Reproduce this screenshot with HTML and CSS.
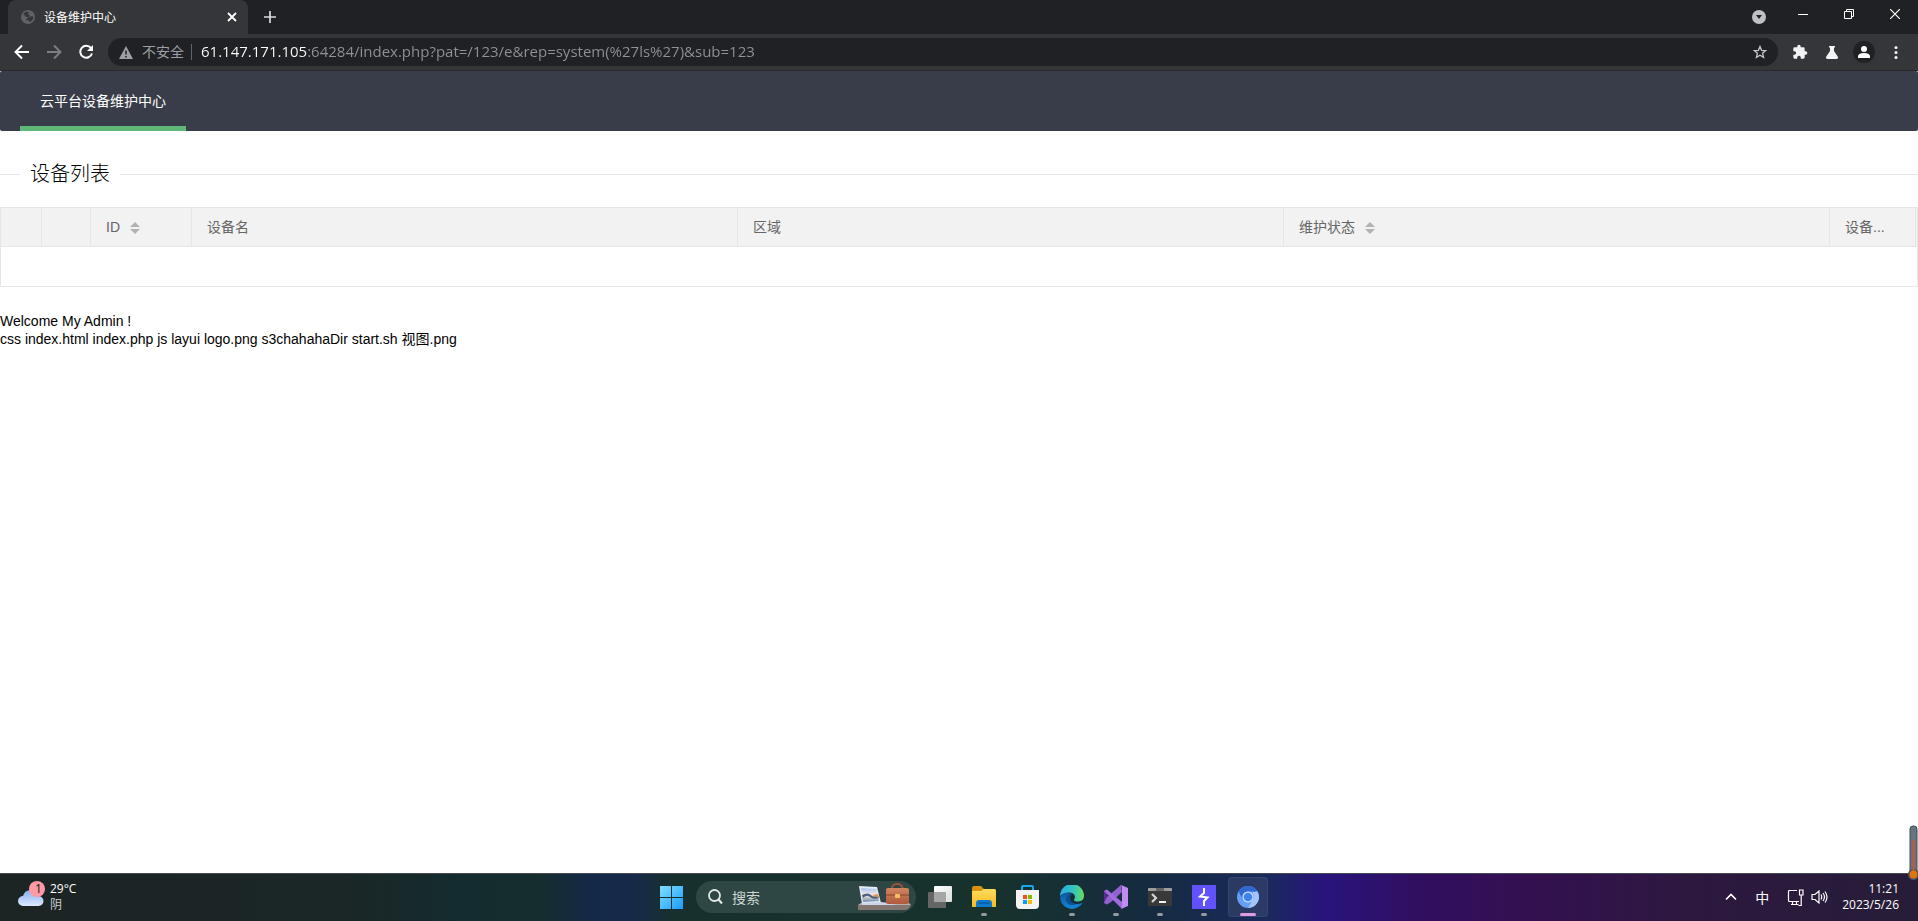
FILE: index.html
```html
<!DOCTYPE html>
<html lang="zh-CN">
<head>
    <meta charset="UTF-8">
    <meta name="viewport" content="width=device-width, initial-scale=1.0">
    <title>设备维护中心</title>
    <link rel="stylesheet" href="styles.css">
</head>
<body>
    <!-- browser -->
    <header class="browser">
        <div class="tab-strip">
            <div class="tab">
                <svg width="14" height="14" viewBox="0 0 14 14"><circle cx="7" cy="7" r="7" fill="#5f6368"/><path d="M2 4l3-2.500 3 .5-1 2 2 1.500-1.500 1.500H5L4 5.500zM8 7l3-1 1.500 1-1 3L9 12 7.500 10.500 5 10l1-2z" fill="#35363a"/></svg>
                <span class="tab-title">设备维护中心</span>
                <button class="icon-btn tab-close" aria-label="关闭标签页">
                    <svg width="10" height="10" viewBox="0 0 10 10"><path d="M1 1l8 8M9 1l-8 8" stroke="#fff" stroke-width="1.800"/></svg>
                </button>
            </div>
            <button class="icon-btn new-tab" aria-label="新标签页">
                <svg width="12" height="12" viewBox="0 0 12 12"><path d="M6 0v12M0 6h12" stroke="#dadce0" stroke-width="1.700"/></svg>
            </button>
            <div class="window-buttons">
                <button class="icon-btn tab-search" aria-label="搜索标签页">
                    <svg width="14" height="14" viewBox="0 0 14 14"><circle cx="7" cy="7" r="7" fill="#bdc1c6"/><path d="M4 5h6l-3 4z" fill="#202124"/></svg>
                </button>
                <button class="icon-btn window-btn" aria-label="最小化">
                    <svg width="10" height="10" viewBox="0 0 10 10"><path d="M0 5.500h10" stroke="#fff"/></svg>
                </button>
                <button class="icon-btn window-btn" aria-label="还原">
                    <svg width="10" height="10" viewBox="0 0 10 10"><path d="M.5 2.500h7v7h-7zM2.500 2.500v-2h7v7h-2" fill="none" stroke="#fff"/></svg>
                </button>
                <button class="icon-btn window-btn" aria-label="关闭">
                    <svg width="10" height="10" viewBox="0 0 10 10"><path d="M0 0l10 10M10 0L0 10" stroke="#fff" stroke-width="1.200"/></svg>
                </button>
            </div>
        </div>
        <div class="toolbar">
            <div class="history">
                <button class="icon-btn" aria-label="后退">
                    <svg width="16" height="16" viewBox="0 0 16 16"><path d="M15 8H2M8 1.500L1.500 8 8 14.500" fill="none" stroke="#fff" stroke-width="1.900"/></svg>
                </button>
                <button class="icon-btn" aria-label="前进">
                    <svg width="16" height="16" viewBox="0 0 16 16"><path d="M1 8h13M8 1.500L14.500 8 8 14.500" fill="none" stroke="#7d7e80" stroke-width="1.900"/></svg>
                </button>
                <button class="icon-btn" aria-label="重新加载">
                    <svg width="16" height="16" viewBox="0 0 16 16"><path d="M13 4a6 6 0 1 0 1 5.500" fill="none" stroke="#fff" stroke-width="2"/><path d="M15 1v6H9z" fill="#fff"/></svg>
                </button>
            </div>
            <div class="address-bar">
                <svg width="14" height="13" viewBox="0 0 14 13"><path d="M7 0l7 13H0z" fill="#9aa0a6"/><path d="M7 4.500v4M7 10v1.500" stroke="#202124" stroke-width="1.500"/></svg>
                <label class="not-secure" for="url">不安全</label>
                <input class="url" id="url" type="text" value="61.147.171.105:64284/index.php?pat=/123/e&amp;rep=system(%27ls%27)&amp;sub=123">
                <button class="icon-btn" aria-label="收藏">
                    <svg width="14" height="14" viewBox="0 0 14 14"><path d="M7 1.500l1.600 3.800 4.100.3-3.100 2.700 1 4L7 10.200l-3.600 2.100 1-4L1.300 5.600l4.100-.3z" fill="none" stroke="#c4c7cb" stroke-width="1.300"/></svg>
                </button>
            </div>
            <div class="extensions">
                <button class="icon-btn" aria-label="扩展程序">
                    <svg width="16" height="16" viewBox="0 0 24 24"><path d="M20.500 11H19V7a2 2 0 0 0-2-2h-4V3.500a2.500 2.500 0 0 0-5 0V5H4a2 2 0 0 0-2 2v3.800h1.500a2.700 2.700 0 0 1 0 5.400H2V20a2 2 0 0 0 2 2h3.800v-1.500a2.700 2.700 0 0 1 5.400 0V22H17a2 2 0 0 0 2-2v-4h1.500a2.500 2.500 0 0 0 0-5z" fill="#f1f3f4"/></svg>
                </button>
                <button class="icon-btn" aria-label="实验">
                    <svg width="12" height="13" viewBox="0 0 12 13"><path d="M3 0h6v1.500H8V5l4 6q.3 1.500-1 2H1q-1.300-.5-1-2l4-6V1.500H3z" fill="#f1f3f4"/></svg>
                </button>
                <button class="icon-btn" aria-label="用户">
                    <svg width="22" height="22" viewBox="0 0 22 22"><circle cx="11" cy="11" r="11" fill="#202124"/><circle cx="11" cy="8" r="3" fill="#fff"/><path d="M5 17v-1.500q0-3.500 6-3.500t6 3.500V17z" fill="#fff"/></svg>
                </button>
                <button class="icon-btn" aria-label="菜单">
                    <svg width="4" height="13" viewBox="0 0 4 13"><g fill="#fff"><circle cx="2" cy="1.600" r="1.500"/><circle cx="2" cy="6.500" r="1.500"/><circle cx="2" cy="11.400" r="1.500"/></g></svg>
                </button>
            </div>
        </div>
    </header>

    <!-- page -->
    <main class="page">
        <nav class="nav">
            <a class="nav-item" href="#">云平台设备维护中心</a>
        </nav>

        <fieldset class="title-line">
            <legend>设备列表</legend>
        </fieldset>

        <div class="table-view">
            <div class="table-header">
                <table>
                    <colgroup>
                        <col class="col-check">
                        <col class="col-num">
                        <col class="col-id">
                        <col>
                        <col>
                        <col>
                        <col class="col-last">
                    </colgroup>
                    <thead>
                        <tr>
                            <th></th>
                            <th></th>
                            <th>ID<span class="sort"></span></th>
                            <th>设备名</th>
                            <th>区域</th>
                            <th>维护状态<span class="sort"></span></th>
                            <th>设备...</th>
                        </tr>
                    </thead>
                </table>
            </div>
            <div class="table-body"></div>
        </div>

        <div class="output">
            Welcome My Admin !<br>
            css index.html index.php js layui logo.png s3chahahaDir start.sh 视图.png
        </div>
    </main>

    <!-- taskbar -->
    <footer class="taskbar">
        <button class="weather">
            <svg width="32" height="28" viewBox="0 0 32 28">
                <defs><linearGradient id="cloud" x2="0" y2="1"><stop stop-color="#86aef0"/><stop offset="1" stop-color="#dfeaff"/></linearGradient></defs>
                <path d="M5 25a5 5 0 0 1 0-10q1.500-6 8-6 6 0 7.500 6a5 5 0 0 1 0 10z" fill="url(#cloud)"/>
                <circle cx="19" cy="8" r="8" fill="#ff99a4"/>
                <text x="17" y="12" font-size="12" fill="#111">1</text>
            </svg>
            <span>29°C<br><span class="sky">阴</span></span>
        </button>

        <div class="apps">
            <button class="app" aria-label="开始">
                <svg width="24" height="24" viewBox="0 0 24 24">
                    <defs><linearGradient id="win" x2="1" y2="1"><stop stop-color="#7fe0ff"/><stop offset="1" stop-color="#1a9bff"/></linearGradient></defs>
                    <path d="M0 1h11v11H0zM12 1h11v11H12zM0 13h11v11H0zM12 13h11v11H12z" fill="url(#win)"/>
                </svg>
            </button>
            <div class="search">
                <svg width="15" height="16" viewBox="0 0 15 16"><circle cx="6.500" cy="6.500" r="5.500" fill="none" stroke="#e2e8e6" stroke-width="1.800"/><path d="M10.500 10.500l3.500 4" stroke="#e2e8e6" stroke-width="2"/></svg>
                <input type="text" placeholder="搜索" aria-label="搜索">
                <svg width="54" height="28" viewBox="0 0 54 28">
                    <defs>
                        <linearGradient id="screen" x2="0" y2="1"><stop stop-color="#a8c4f0"/><stop offset=".5" stop-color="#f3e8e4"/><stop offset="1" stop-color="#7088a8"/></linearGradient>
                        <linearGradient id="bag" x2="0" y2="1"><stop stop-color="#d08560"/><stop offset="1" stop-color="#b0593e"/></linearGradient>
                    </defs>
                    <path d="M0 22h53q-2 5-6 5H0z" fill="#82766f"/>
                    <path d="M0 22l3-2h48l2 2z" fill="#b8aea9"/>
                    <path d="M1 3l18 1 4 16-19 1z" fill="#e5ebf5"/>
                    <path d="M3 5l15 1 3 12-16 1z" fill="url(#screen)"/>
                    <path d="M4 12q6-3 9 0t7 0l1 3q-6 2-9-1t-7 1z" fill="#4d5f7c"/>
                    <path d="M14 12l6-1 1 4z" fill="#e09358"/>
                    <path d="M4 20l19-1 16 2-6 1H4z" fill="#cbd4ea"/>
                    <path d="M34 6q0-5 5-5t6 5" fill="none" stroke="#9a5238" stroke-width="1.800"/>
                    <rect x="28" y="5" width="23" height="16" rx="2" fill="url(#bag)"/>
                    <path d="M28 12h23" stroke="#8e432e"/>
                    <rect x="37" y="11" width="5" height="4" rx="1" fill="#f2c060"/>
                </svg>
            </div>
            <button class="app" aria-label="任务视图">
                <svg width="24" height="24" viewBox="0 0 24 24">
                    <defs><linearGradient id="view" x2="1" y2="1"><stop stop-color="#fff"/><stop offset="1" stop-color="#dcdcdc"/></linearGradient></defs>
                    <rect x="6" y="1" width="18" height="16" rx="1" fill="url(#view)"/>
                    <rect y="7" width="18" height="16" rx="1" fill="#666"/>
                    <path d="M6 7h12v10H6z" fill="#a6a6a6"/>
                </svg>
            </button>
            <button class="app running" aria-label="文件资源管理器">
                <svg width="24" height="24" viewBox="0 0 24 24">
                    <defs><linearGradient id="folder" x2="0" y2="1"><stop stop-color="#ffdc5e"/><stop offset="1" stop-color="#f9b81e"/></linearGradient></defs>
                    <path d="M0 3q0-2 2-2h7l3 3h10q2 0 2 2v6H0z" fill="#d8930b"/>
                    <path d="M0 6h9l3-2h10q2 0 2 2v16H0z" fill="url(#folder)"/>
                    <path d="M4 22v-4q0-3 3-3h10q3 0 3 3v4z" fill="#0f7bd0"/>
                    <path d="M7 18h10" stroke="#075c9e" stroke-width="1.600" stroke-linecap="round"/>
                </svg>
            </button>
            <button class="app" aria-label="应用商店">
                <svg width="24" height="24" viewBox="0 0 24 24">
                    <path d="M6 6V2q0-1 1-1h9q1 0 1 1v4" fill="none" stroke="#18a7ee" stroke-width="2"/>
                    <path d="M0 5h23v15q0 4-4 4H4q-4 0-4-4z" fill="#f3f3f3"/>
                    <path d="M7 10h4v4H7z" fill="#f25022"/><path d="M12 10h4v4h-4z" fill="#7fba00"/><path d="M7 15h4v4H7z" fill="#00a4ef"/><path d="M12 15h4v4h-4z" fill="#ffb900"/>
                </svg>
            </button>
            <button class="app running" aria-label="Edge">
                <svg width="24" height="24" viewBox="0 0 24 24">
                    <defs>
                        <linearGradient id="edge-top"><stop stop-color="#28a8e8"/><stop offset=".6" stop-color="#36c6b8"/><stop offset="1" stop-color="#6bdc57"/></linearGradient>
                        <linearGradient id="edge-low" x2="0" y2="1"><stop stop-color="#0c59a4"/><stop offset="1" stop-color="#1585d5"/></linearGradient>
                    </defs>
                    <path d="M0 12a12 12 0 0 0 19 9.500q3-1.500 3.500-4-3 2-7 1.500-6-1-6-6 0-3 2-4Q4 6 0 12z" fill="url(#edge-low)"/>
                    <path d="M0 11A12 12 0 0 1 24 11q0 5-6 5.500-4 0-4-2 1-1 1-3-1-4-6-4-6 0-9 3.500z" fill="url(#edge-top)"/>
                    <path d="M7 11q3-4 6-2-3 0-3 4 0 5 6 6-7 3-10-3-1-3 1-5z" fill="#0b4f91"/>
                </svg>
            </button>
            <button class="app running" aria-label="Visual Studio">
                <svg width="24" height="24" viewBox="0 0 24 24">
                    <path d="M0 6l3-1.500v15L0 18z" fill="#5b2d91"/>
                    <path d="M3 12L17 0l1 7L7 17l-4 2.500L0 18z" fill="#9260cf"/>
                    <path d="M17 0l7 3v18l-7 3 1-3V3z" fill="#c08cf2"/>
                    <path d="M3 4.500L18 17v7L0 6z" fill="#a26bdc"/>
                </svg>
            </button>
            <button class="app running" aria-label="终端">
                <svg width="24" height="24" viewBox="0 0 24 24">
                    <rect y="3" width="24" height="18" rx="1" fill="#393939"/>
                    <path d="M0 6V4q0-1 1-1h22q1 0 1 1v2z" fill="#9c9c9c"/><path d="M8 3h8v3H8z" fill="#666"/>
                    <path d="M4 9l4 4-4 4" fill="none" stroke="#d5d5d5" stroke-width="2.200"/><path d="M11 17h7" stroke="#f1f1f1" stroke-width="2"/>
                </svg>
            </button>
            <button class="app running" aria-label="Burp Suite">
                <svg width="24" height="24" viewBox="0 0 24 24">
                    <path d="M0 0h24v24H0z" fill="#6151ff"/>
                    <path d="M12 3v5l-4 3.500 7.500 1L12 16v5" fill="none" stroke="#fff" stroke-width="2"/>
                </svg>
            </button>
            <button class="app running active" aria-label="Chromium">
                <svg width="24" height="24" viewBox="0 0 24 24">
                    <circle cx="12" cy="12" r="11" fill="#669df6"/>
                    <path d="M2.500 6.500A11 11 0 0 1 21.500 6.500H12a5.500 5.500 0 0 0-5 8z" fill="#3167d1"/>
                    <path d="M21.500 6.500A11 11 0 0 1 12 23l5-8.500a5.500 5.500 0 0 0-1-7z" fill="#a3c4fb"/>
                    <circle cx="12" cy="12" r="5.500" fill="#c9ddfd"/><circle cx="12" cy="12" r="4.300" fill="#3f82f0"/>
                </svg>
            </button>
        </div>

        <div class="tray">
            <button class="icon-btn" aria-label="显示隐藏的图标">
                <svg width="12" height="8" viewBox="0 0 12 8"><path d="M1 6.500l5-5 5 5" fill="none" stroke="#fff" stroke-width="1.600"/></svg>
            </button>
            <button class="icon-btn ime">中</button>
            <button class="icon-btn" aria-label="网络和音量">
                <svg width="17" height="17" viewBox="0 0 17 17"><path d="M10 1.500H2.500q-1 0-1 1v9q0 1 1 1h9.500M5.500 13v2.500M9.500 13v2.500M4 15.500h7.500M12.500 1h3.500v5h-3.500zM14.200 6v10.500h-2.700" fill="none" stroke="#fff" stroke-width="1.200"/></svg>
                <svg width="17" height="14" viewBox="0 0 17 14"><path d="M1 4.500h3l4-3.500v12L4 9.500H1zM10 4.500q1.500 2.500 0 5M12 3q3 4 0 8M14 1.500q4 5.500 0 11" fill="none" stroke="#fff" stroke-width="1.200"/></svg>
            </button>
            <button class="clock">11:21<br>2023/5/26</button>
        </div>

        <!-- temperature widget hanging over the screen edge -->
        <svg class="thermometer" width="10" height="56" viewBox="0 0 10 56">
            <rect x="2" y="1" width="7" height="50" rx="3" fill="#66757f" stroke="#3f4d56"/>
            <circle cx="5.500" cy="49.500" r="5.500" fill="#44535d"/>
            <path d="M5.500 15v32" stroke="#d2512b" stroke-width="2"/>
            <circle cx="5.500" cy="49.500" r="4" fill="#df730c"/>
        </svg>
    </footer>
</body>
</html>
```
FILE: styles.css
```css
* {
    box-sizing: border-box;
}

body {
    display: flex;
    flex-direction: column;
    min-height: 100vh;
    margin: 0;
    background-color: #fff;
    color: #000;
    font-family: "Liberation Sans", "Noto Sans CJK SC", sans-serif;
    font-size: 14px;
}

button,
input {
    font-family: inherit;
    padding: 0;
    border: none;
    background: none;
    outline: none;
}

svg {
    display: block;
    flex-shrink: 0;
}

.icon-btn {
    display: flex;
    align-items: center;
    justify-content: center;
    cursor: pointer;
}

/* browser */
.browser {
    font-family: "Open Sans", "Noto Sans CJK SC", sans-serif;
    background-color: #202124;
    border-bottom: 1px solid #28292c;
}

.tab-strip {
    display: flex;
    align-items: center;
    height: 34px;
    padding-left: 8px;
}

.tab {
    display: flex;
    align-items: center;
    width: 240px;
    height: 34px;
    padding: 0 11px 0 13px;
    border-radius: 8px 8px 0 0;
    background-color: #35363a;
    color: #fff;
    font-size: 12px;
}

.tab-title {
    flex: 1;
    margin-left: 9px;
}

.new-tab {
    margin-left: 16px;
}

.window-buttons {
    display: flex;
    align-items: center;
    margin-left: auto;
}

.tab-search {
    width: 42px;
}

.window-btn {
    width: 46px;
    height: 34px;
    padding-bottom: 6px;
}

.toolbar {
    display: flex;
    align-items: center;
    height: 36px;
    padding: 0 6px 0 14px;
    background-color: #35363a;
}

.history {
    display: flex;
    gap: 16px;
}

.address-bar {
    flex: 1;
    display: flex;
    align-items: center;
    height: 28px;
    margin: 0 6px 0 14px;
    padding: 0 11px;
    border-radius: 14px;
    background-color: #202124;
}

.not-secure {
    margin-left: 9px;
    padding-right: 7px;
    border-right: 1px solid #5f6368;
    color: #9aa0a6;
    line-height: 16px;
}

/* host in white, the rest of the address greyed */
.url {
    flex: 1;
    margin-left: 9px;
    padding-bottom: 2px;
    font-size: 15px;
    color: transparent;
    background-image: linear-gradient(90deg, #fff 106px, #8f9296 106px);
    -webkit-background-clip: text;
    background-clip: text;
}

.extensions {
    display: flex;
    align-items: center;
}

.extensions .icon-btn {
    width: 32px;
}

/* page */
.page {
    flex: 1;
}

.nav {
    display: flex;
    height: 60px;
    padding: 0 20px;
    border-radius: 2px;
    background-color: #393d49;
}

.nav-item {
    padding: 0 20px;
    border-bottom: 5px solid #5fb878;
    color: #fff;
    line-height: 60px;
    text-decoration: none;
}

.title-line {
    margin: 28px 0 18px;
    padding: 0;
    border: none;
    border-top: 1px solid #e6e6e6;
}

.title-line legend {
    margin-left: 20px;
    padding: 0 10px;
    font-size: 20px;
    font-weight: 300;
    line-height: 30px;
}

.table-view {
    border: 1px solid #e6e6e6;
}

.table-header {
    padding-right: 1px;
    background-color: #f2f2f2;
    border-bottom: 1px solid #e6e6e6;
}

.table-header table {
    width: 100%;
    table-layout: fixed;
    border-collapse: separate;
    border-spacing: 0;
}

.table-header th {
    height: 38px;
    padding: 0 15px;
    border-right: 1px solid #e6e6e6;
    color: #666;
    font-weight: 400;
    line-height: 28px;
    text-align: left;
    white-space: nowrap;
}

.col-check {
    width: 41px;
}

.col-num {
    width: 49px;
}

.col-id {
    width: 101px;
}

.col-last {
    width: 86px;
}

.sort {
    display: inline-flex;
    flex-direction: column;
    gap: 2px;
    margin-left: 10px;
    vertical-align: middle;
}

.sort::before,
.sort::after {
    content: "";
    border: 5px solid transparent;
}

.sort::before {
    border-top: none;
    border-bottom-color: #b2b2b2;
}

.sort::after {
    border-bottom: none;
    border-top-color: #b2b2b2;
}

.table-body {
    height: 39px;
}

.output {
    margin-top: 25px;
    line-height: 18px;
}

/* taskbar */
.taskbar {
    position: relative;
    display: grid;
    grid-template-columns: 1fr auto 1fr;
    align-items: center;
    height: 48px;
    padding-bottom: 1px;
    border-top: 1px solid #454a52;
    background: linear-gradient(90deg, #1c2424 0%, #1b2626 18%, #142c2f 24%, #162d2e 28%, #142948 31%, #172949 33%, #17302f 35%, #17322d 52%, #152b40 60%, #1a2a5c 66%, #28147c 69%, #310f60 74%, #341052 79%, #2d183f 88%, #261d38 100%);
    color: #fff;
    font-family: "Open Sans", "Noto Sans CJK SC", sans-serif;
}

.weather {
    display: flex;
    padding-left: 18px;
    color: #fff;
    font-size: 12px;
    line-height: 16px;
    text-align: left;
}

.sky {
    color: #ccd0d0;
}

.apps {
    display: flex;
    align-items: center;
    gap: 4px;
    padding-left: 2px;
}

.app {
    position: relative;
    display: flex;
    align-items: center;
    justify-content: center;
    width: 40px;
    height: 40px;
    border-radius: 4px;
    cursor: pointer;
}

.app.running::after {
    content: "";
    position: absolute;
    bottom: 1px;
    left: 17px;
    width: 6px;
    height: 3px;
    border-radius: 2px;
    background-color: #929ba0;
}

.app.active {
    background-color: rgba(255, 255, 255, 0.08);
    border: 1px solid rgba(255, 255, 255, 0.06);
}

.app.active::after {
    left: 11px;
    bottom: 0;
    width: 16px;
    background-color: #e29ae2;
}

.search {
    display: flex;
    align-items: center;
    width: 220px;
    height: 32px;
    padding: 0 4px 0 12px;
    border-radius: 16px;
    background-color: #2f4744;
}

.search input {
    flex: 1;
    min-width: 0;
    margin-left: 9px;
    color: #fff;
    font-size: 14px;
}

.search input::placeholder {
    color: #ced6d4;
}

.tray {
    display: flex;
    align-items: center;
    justify-content: flex-end;
    gap: 14px;
    padding-right: 19px;
}

.tray .icon-btn {
    gap: 7px;
    color: #fff;
}

.tray .ime {
    padding: 0 4px;
    font-size: 14px;
}

.clock {
    color: #fff;
    font-size: 12px;
    line-height: 16px;
    text-align: right;
}

.thermometer {
    position: absolute;
    right: 0;
    bottom: 40px;
}
```
